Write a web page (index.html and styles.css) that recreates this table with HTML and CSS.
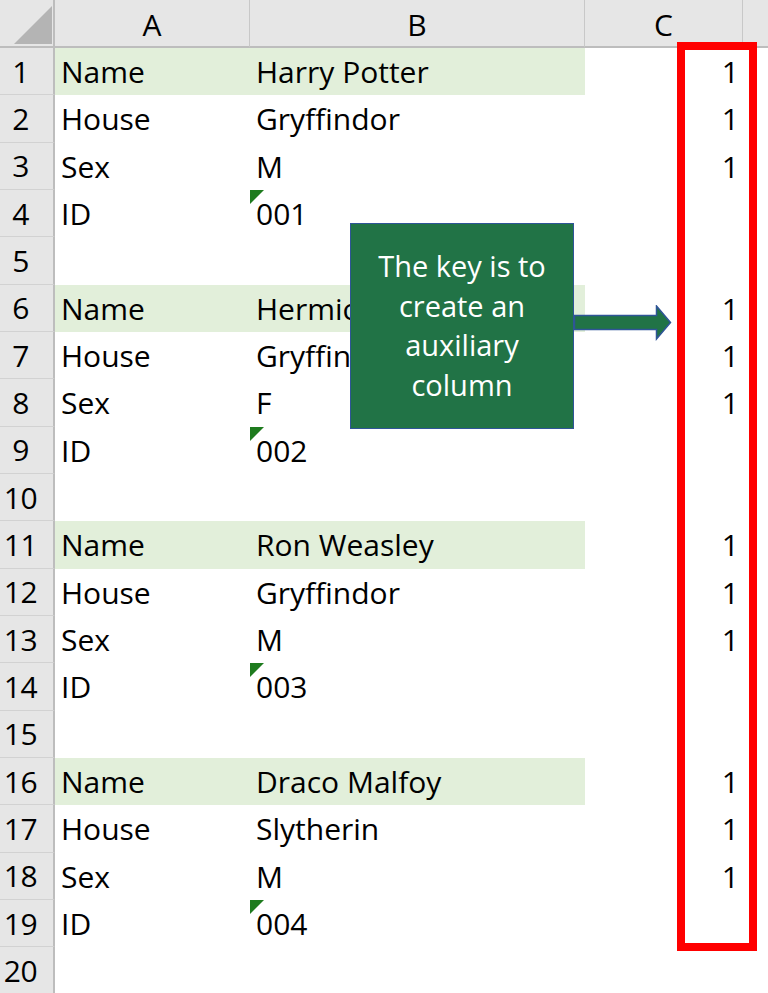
FILE: index.html
```html
<!DOCTYPE html>
<html>
<head>
<meta charset="utf-8">
<link rel="stylesheet" href="styles.css">
</head>
<body>
<div class="page">
  <div class="sheet">
    <div class="corner"><svg width="55" height="48" viewBox="0 0 55 48"><polygon points="14,44 52,6 52,44" fill="#b4b4b4"/></svg></div>
    <div class="ch">A</div><div class="ch">B</div><div class="ch">C</div><div class="ch last"></div>

    <div class="rh">1</div><div class="c hl">Name</div><div class="c hl">Harry Potter</div><div class="c num">1</div><div class="c"></div>
    <div class="rh">2</div><div class="c">House</div><div class="c">Gryffindor</div><div class="c num">1</div><div class="c"></div>
    <div class="rh">3</div><div class="c">Sex</div><div class="c">M</div><div class="c num">1</div><div class="c"></div>
    <div class="rh">4</div><div class="c">ID</div><div class="c flagged"><span class="flag"></span>001</div><div class="c num"></div><div class="c"></div>
    <div class="rh">5</div><div class="c"></div><div class="c"></div><div class="c num"></div><div class="c"></div>

    <div class="rh">6</div><div class="c hl">Name</div><div class="c hl">Hermione Granger</div><div class="c num">1</div><div class="c"></div>
    <div class="rh">7</div><div class="c">House</div><div class="c">Gryffindor</div><div class="c num">1</div><div class="c"></div>
    <div class="rh">8</div><div class="c">Sex</div><div class="c">F</div><div class="c num">1</div><div class="c"></div>
    <div class="rh">9</div><div class="c">ID</div><div class="c flagged"><span class="flag"></span>002</div><div class="c num"></div><div class="c"></div>
    <div class="rh">10</div><div class="c"></div><div class="c"></div><div class="c num"></div><div class="c"></div>

    <div class="rh">11</div><div class="c hl">Name</div><div class="c hl">Ron Weasley</div><div class="c num">1</div><div class="c"></div>
    <div class="rh">12</div><div class="c">House</div><div class="c">Gryffindor</div><div class="c num">1</div><div class="c"></div>
    <div class="rh">13</div><div class="c">Sex</div><div class="c">M</div><div class="c num">1</div><div class="c"></div>
    <div class="rh">14</div><div class="c">ID</div><div class="c flagged"><span class="flag"></span>003</div><div class="c num"></div><div class="c"></div>
    <div class="rh">15</div><div class="c"></div><div class="c"></div><div class="c num"></div><div class="c"></div>

    <div class="rh">16</div><div class="c hl">Name</div><div class="c hl">Draco Malfoy</div><div class="c num">1</div><div class="c"></div>
    <div class="rh">17</div><div class="c">House</div><div class="c">Slytherin</div><div class="c num">1</div><div class="c"></div>
    <div class="rh">18</div><div class="c">Sex</div><div class="c">M</div><div class="c num">1</div><div class="c"></div>
    <div class="rh">19</div><div class="c">ID</div><div class="c flagged"><span class="flag"></span>004</div><div class="c num"></div><div class="c"></div>
    <div class="rh">20</div><div class="c"></div><div class="c"></div><div class="c num"></div><div class="c"></div>
  </div>

  <div class="callout">The key is to<br>create an<br>auxiliary<br>column</div>
  <svg class="arrow" width="100" height="36" viewBox="0 0 100 36">
    <polygon points="0.5,10.5 82.5,10.5 82.5,1 96.5,17.5 82.5,34 82.5,24.5 0.5,24.5" fill="#217346" stroke="#2f5597" stroke-width="1.5"/>
  </svg>
  <div class="redbox"></div>
</div>
</body>
</html>
```
FILE: styles.css
```css
html, body {
  margin: 0;
  padding: 0;
  background: #ffffff;
}

.page {
  position: relative;
  width: 768px;
  height: 993px;
  overflow: hidden;
  font-family: "Open Sans", "Liberation Sans", sans-serif;
  color: #000;
}

.sheet {
  display: grid;
  grid-template-columns: 55px 195px 335px 158px 25px;
  grid-template-rows: 48px repeat(20, 47.33px);
}

.corner {
  background: #e6e6e6;
  border-bottom: 2px solid #bdbdbd;
  border-right: 2px solid #bdbdbd;
  box-sizing: border-box;
  overflow: hidden;
}

.corner svg {
  display: block;
}

.ch {
  background: #e6e6e6;
  border-bottom: 2px solid #bdbdbd;
  border-right: 1px solid #c8c8c8;
  box-sizing: border-box;
  display: flex;
  align-items: center;
  justify-content: center;
  font-size: 30px;
  padding-top: 3px;
}

.ch.last {
  border-right: none;
}

.rh {
  background: #e6e6e6;
  border-right: 2px solid #bdbdbd;
  border-bottom: 1px solid #d2d2d2;
  box-sizing: border-box;
  display: flex;
  align-items: center;
  justify-content: center;
  padding-right: 12px;
  font-size: 30px;
  letter-spacing: -0.5px;
}

.c {
  position: relative;
  display: flex;
  align-items: center;
  padding-left: 6px;
  font-size: 30px;
  white-space: nowrap;
  overflow: visible;
  background: #fff;
}

.c.hl {
  background: #e2efda;
}

.c.num {
  justify-content: flex-end;
  padding-right: 4px;
}

.flag {
  position: absolute;
  left: 0;
  top: 0;
  width: 0;
  height: 0;
  border-top: 14px solid #1e7b1e;
  border-right: 14px solid transparent;
}

.callout {
  position: absolute;
  left: 350px;
  top: 223px;
  width: 224px;
  height: 206px;
  box-sizing: border-box;
  background: #217346;
  border: 1.5px solid #2f5597;
  color: #fff;
  font-size: 29px;
  line-height: 39.5px;
  text-align: center;
  display: flex;
  align-items: center;
  justify-content: center;
  padding-bottom: 2px;
}

.arrow {
  position: absolute;
  left: 574px;
  top: 305px;
}

.redbox {
  position: absolute;
  left: 677px;
  top: 42px;
  width: 80px;
  height: 909px;
  box-sizing: border-box;
  border: 8px solid #ff0000;
}
```
